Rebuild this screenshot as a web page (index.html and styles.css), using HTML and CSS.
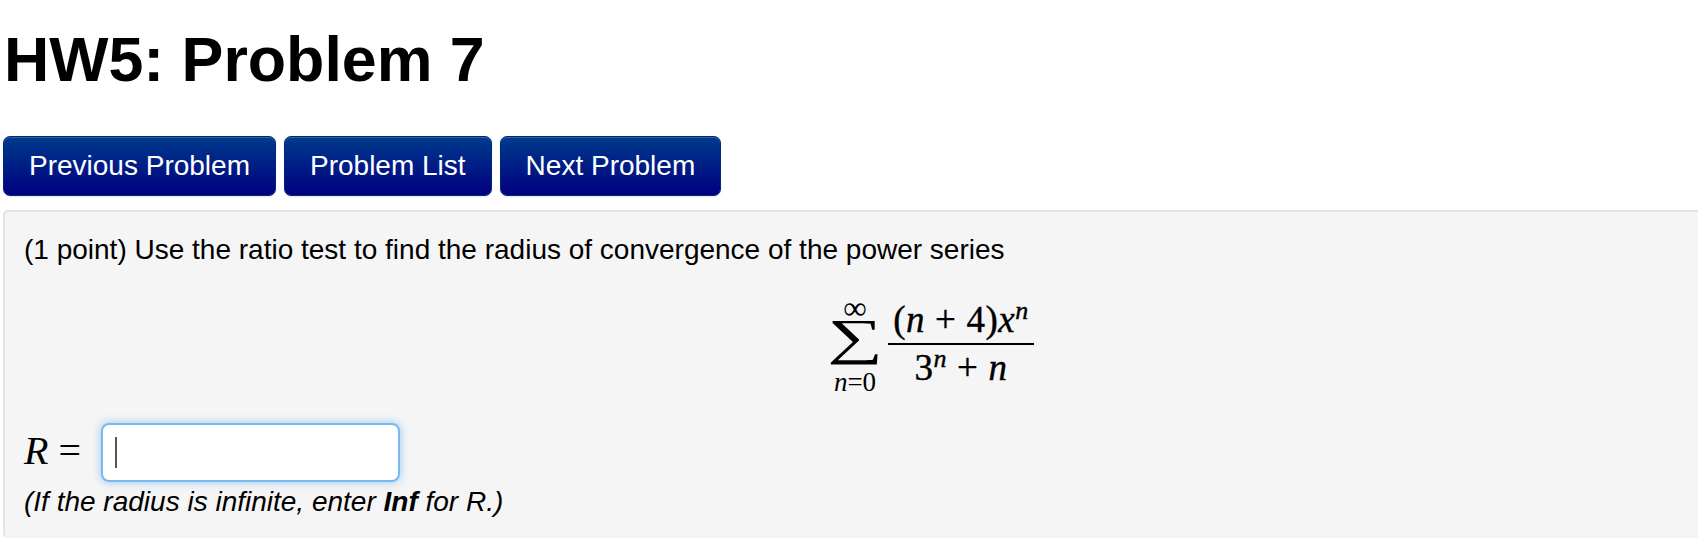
FILE: index.html
```html
<!DOCTYPE html>
<html lang="en">
<head>
    <meta charset="UTF-8">
    <title>HW5: Problem 7</title>
    <link rel="stylesheet" href="styles.css">
</head>
<body>
    <h1>HW5: Problem 7</h1>

    <div class="buttons">
        <a class="nav-button" href="#">Previous Problem</a>
        <a class="nav-button" href="#">Problem List</a>
        <a class="nav-button" href="#">Next Problem</a>
    </div>

    <div class="problem">
        <p class="statement">(1 point) Use the ratio test to find the radius of convergence of the power series</p>

        <div class="display-math">
            <div class="sum">
                <span class="sum-top">∞</span>
                <span class="sum-sign">∑</span>
                <span class="sum-bottom"><i>n</i>=0</span>
            </div>
            <div class="fraction">
                <div class="numerator">(<i>n</i><span class="op">+</span>4)<i>x</i><sup><i>n</i></sup></div>
                <div class="denominator">3<sup><i>n</i></sup><span class="op">+</span><i>n</i></div>
            </div>
        </div>

        <div class="answer-row">
            <span class="answer-label"><i>R</i><span class="op">=</span></span>
            <div class="answer-box">
                <input class="answer-input" type="text" aria-label="R">
                <span class="caret"></span>
            </div>
        </div>

        <p class="hint">(If the radius is infinite, enter <b>Inf</b> for R.)</p>
    </div>
</body>
</html>
```

FILE: styles.css
```css
html, body {
    height: 538px;
    overflow: hidden;
}

body {
    margin: 0;
    padding-left: 3px;
    font-family: "Liberation Sans", Arial, sans-serif;
    background: #fff;
    color: #000;
}

h1 {
    margin: 0;
    padding: 23px 0 0 1px;
    height: 114px;
    box-sizing: border-box;
    font-size: 62.7px;
    line-height: 72px;
    font-weight: bold;
}

.buttons {
    display: flex;
    gap: 8px;
    height: 60px;
    margin-top: 22px;
}

.nav-button {
    display: flex;
    align-items: center;
    justify-content: center;
    box-sizing: border-box;
    padding: 0 25px;
    border: 1px solid #00287a;
    border-radius: 7px;
    background: linear-gradient(#003a8c, #00007f);
    box-shadow: inset 0 1px 0 rgba(255, 255, 255, 0.2), 0 1px 2px rgba(0, 0, 0, 0.1);
    color: #fff;
    font-size: 28px;
    text-decoration: none;
}

.problem {
    margin: 14px -30px 0 0;
    height: 328px;
    box-sizing: border-box;
    padding: 20px 0 0 19px;
    border: 2px solid #e3e3e3;
    border-bottom: none;
    border-radius: 5px;
    background: #f5f5f5;
    font-size: 28px;
}

.statement {
    margin: 0;
    line-height: 36px;
}

.display-math {
    display: flex;
    align-items: center;
    margin-top: 30px;
    padding-left: 808px;
    height: 94px;
    font-family: "Liberation Serif", "Times New Roman", serif;
}

.sum {
    display: flex;
    flex-direction: column;
    align-items: center;
    width: 46px;
    margin-right: 10px;
}

.sum-top {
    font-size: 33px;
    line-height: 18px;
}

.sum-sign {
    display: block;
    height: 46px;
    font-size: 78px;
    line-height: 46px;
    transform: translateY(-3px) scaleY(0.64);
}

.sum-bottom {
    margin-top: 9px;
    font-size: 27px;
    line-height: 20px;
    white-space: nowrap;
}

.fraction {
    width: 146px;
    margin-top: -2px;
    text-align: center;
    font-size: 37px;
    letter-spacing: 0.5px;
    -webkit-text-stroke: 0.4px #000;
}

.numerator {
    line-height: 40px;
    padding-bottom: 3px;
    border-bottom: 2px solid #000;
}

.denominator {
    padding-top: 3px;
    line-height: 40px;
}

.fraction .op {
    margin: 0 10px;
}

.fraction sup {
    font-size: 26px;
    line-height: 0;
    vertical-align: 13px;
}

.answer-row {
    display: flex;
    align-items: center;
    margin-top: 31px;
}

.answer-label {
    display: inline-block;
    width: 77px;
    padding-bottom: 4px;
    font-family: "Liberation Serif", "Times New Roman", serif;
    font-size: 40px;
}

.answer-label .op {
    margin-left: 10px;
}

.answer-box {
    position: relative;
    width: 299px;
    height: 59px;
}

.answer-input {
    display: block;
    width: 100%;
    height: 100%;
    box-sizing: border-box;
    border: 2px solid #7ab8f0;
    border-radius: 8px;
    background: #fff;
    box-shadow: 0 0 10px rgba(82, 168, 236, 0.6);
    outline: none;
}

.caret {
    position: absolute;
    left: 14px;
    top: 14px;
    width: 2px;
    height: 31px;
    background: #555;
}

.hint {
    margin: 2px 0 0;
    line-height: 36px;
    font-style: italic;
}
```
